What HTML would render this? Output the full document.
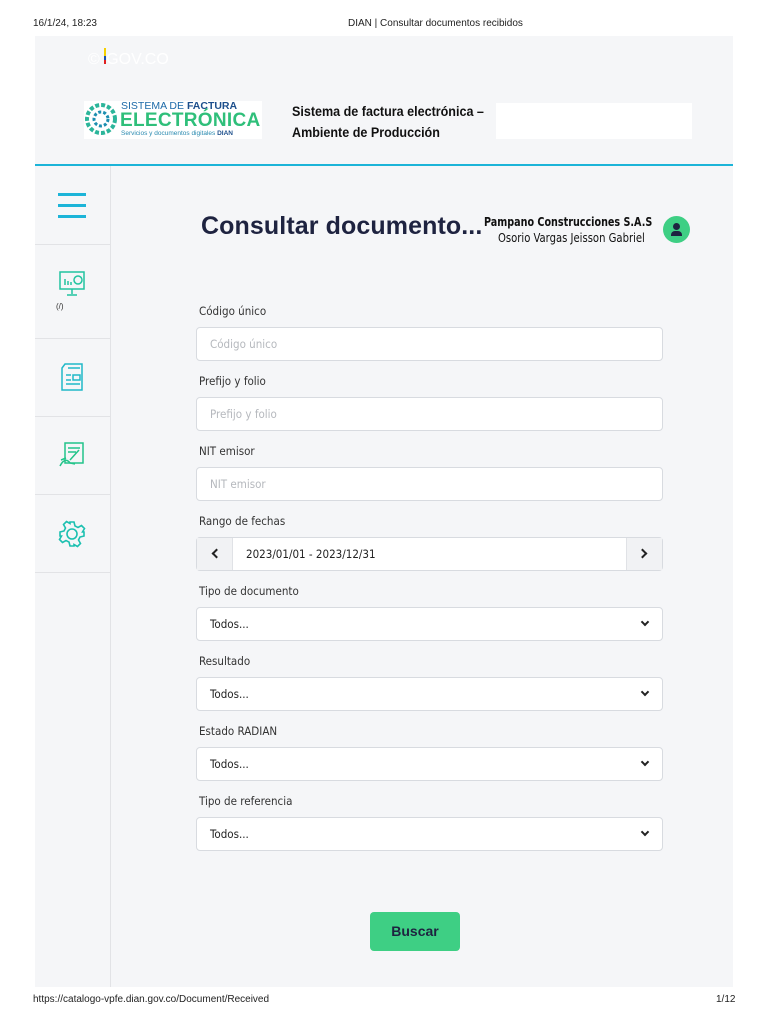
<!DOCTYPE html>
<html><head><meta charset="utf-8"><style>
*{box-sizing:border-box;margin:0;padding:0}
body{width:768px;height:1024px;background:#fff;font-family:"Liberation Sans",sans-serif;position:relative;overflow:hidden}
.a{position:absolute}
.top{font-size:10px;color:#222}
.page{left:35px;top:36px;width:698px;height:951px;background:#f5f6f8}
.line{left:35px;top:164px;width:698px;height:2px;background:#1cb4d8}
.side{left:110px;top:166px;width:1px;height:821px;background:#e2e3e6}
.sd{left:35px;width:75px;height:1px;background:#e2e3e6}
.lbl{left:199px;font-size:11.5px;color:#333;font-family:"DejaVu Sans Condensed","Liberation Sans",sans-serif}
.in{left:196px;width:467px;height:34px;background:#fff;border:1px solid #d8dbe0;border-radius:4px;font-size:11.5px;color:#b5b8bd;padding:9px 13px;font-family:"DejaVu Sans Condensed","Liberation Sans",sans-serif}
.sel{color:#222}
.chev{position:absolute;right:14px;top:11px;width:6px;height:6px;border-right:2px solid #222;border-bottom:2px solid #222;transform:rotate(45deg)}
</style></head><body>
<div class="a top" style="left:33px;top:18px">16/1/24, 18:23</div>
<div class="a top" style="left:348px;top:18px">DIAN | Consultar documentos recibidos</div>
<div class="a page"></div>
<div class="a" style="left:88px;top:48px;font-size:16px;color:#fff">© <span style="display:inline-block;width:2px;height:16px;background:linear-gradient(#f5d000 50%,#1a4fb0 50% 75%,#e02020 75%)"></span>GOV.CO</div>
<div class="a" style="left:84px;top:101px;width:178px;height:38px;background:#fff"></div>
<svg class="a" style="left:85px;top:102px" width="32" height="34" viewBox="0 0 32 34"><circle cx="16" cy="17" r="14" fill="none" stroke="#2bb59a" stroke-width="4" stroke-dasharray="4 2"/><circle cx="16" cy="17" r="7" fill="none" stroke="#1d8fb0" stroke-width="3" stroke-dasharray="3 2"/></svg>
<div class="a" style="left:121px;top:100px;font-size:10.5px;color:#1d6aa8">SISTEMA DE <b style="color:#1d4f8c">FACTURA</b></div>
<div class="a" style="left:120px;top:110px;font-size:19px;font-weight:bold;color:#2fbf7a;letter-spacing:.3px">ELECTRÓNICA</div>
<div class="a" style="left:121px;top:130px;font-size:6.5px;color:#2a8ab0">Servicios y documentos digitales <b style="color:#1d4f8c">DIAN</b></div>
<div class="a" style="left:292px;top:101px;font-size:13.5px;font-weight:bold;color:#111;line-height:21px;transform:scaleX(.93);transform-origin:left">Sistema de factura electrónica –<br>Ambiente de Producción</div>
<div class="a" style="left:496px;top:103px;width:196px;height:36px;background:#fff"></div>
<div class="a line"></div>
<div class="a side"></div>
<div class="a" style="left:58px;top:193px;width:28px;height:3px;background:#1cb4d8;box-shadow:0 11px 0 #1cb4d8,0 22px 0 #1cb4d8"></div>
<div class="a sd" style="top:244px"></div><div class="a sd" style="top:338px"></div><div class="a sd" style="top:416px"></div><div class="a sd" style="top:494px"></div><div class="a sd" style="top:572px"></div>
<svg class="a" style="left:58px;top:270px" width="28" height="28" viewBox="0 0 28 28" fill="none" stroke="#22c4a0" stroke-width="1.5"><rect x="2" y="2" width="24" height="17"/><path d="M7 15v-6M10 15v-4M13 15v-3M14 19v5M9 25h10"/><circle cx="20" cy="10" r="4"/></svg>
<div class="a" style="left:56px;top:302px;font-size:8px;color:#333">(/)</div>
<svg class="a" style="left:60px;top:362px" width="24" height="30" viewBox="0 0 24 30" fill="none" stroke="#20b8c8" stroke-width="1.5"><path d="M5 2h17v26H2V6zM8 6h12M6 13h5M13 13h7v5h-7zM6 18h5M6 22h14"/></svg>
<svg class="a" style="left:57px;top:440px" width="30" height="30" viewBox="0 0 30 30" fill="none" stroke="#22c48a" stroke-width="1.5"><rect x="8" y="3" width="18" height="20"/><path d="M11 8h12M11 12h8M22 10l-9 10M3 26c4-8 8-6 10-3l5 1M4 20l5-2"/></svg>
<svg class="a" style="left:58px;top:520px" width="28" height="28" viewBox="0 0 28 28" fill="none" stroke="#1cc0b0" stroke-width="1.6"><path d="M12 2h4l1 4 3 1.5 3.5-2 3 3-2 3.5L26 12v4l-4 1-1.5 3 2 3.5-3 3-3.5-2L16 26h-4l-1-4-3-1.5-3.5 2-3-3 2-3.5L2 16v-4l4-1 1.5-3-2-3.5 3-3 3.5 2z"/><circle cx="14" cy="14" r="5"/></svg>
<div class="a" style="left:201px;top:212px;font-size:25px;font-weight:bold;color:#1e2340;letter-spacing:.1px;white-space:nowrap">Consultar documento...</div>
<div class="a" style="left:484px;top:215px;font-size:12px;font-weight:bold;color:#111;font-family:'DejaVu Sans Condensed',sans-serif;transform:scaleX(.89);transform-origin:left;white-space:nowrap">Pampano Construcciones S.A.S</div>
<div class="a" style="left:498px;top:231px;font-size:12px;color:#111;font-family:'DejaVu Sans Condensed',sans-serif;transform:scaleX(.93);transform-origin:left;white-space:nowrap">Osorio Vargas Jeisson Gabriel</div>
<div class="a" style="left:663px;top:216px;width:27px;height:27px;border-radius:50%;background:#3ecf84"></div>
<div class="a" style="left:673px;top:223px;width:7px;height:7px;border-radius:50%;background:#1e2340"></div>
<div class="a" style="left:671px;top:231px;width:11px;height:5px;border-radius:4px 4px 0 0;background:#1e2340"></div>

<div class="a lbl" style="top:304px">Código único</div>
<div class="a in" style="top:327px">Código único</div>
<div class="a lbl" style="top:374px">Prefijo y folio</div>
<div class="a in" style="top:397px">Prefijo y folio</div>
<div class="a lbl" style="top:444px">NIT emisor</div>
<div class="a in" style="top:467px">NIT emisor</div>
<div class="a lbl" style="top:514px">Rango de fechas</div>
<div class="a in sel" style="top:537px;padding:0;background:#fff">
 <div class="a" style="left:0;top:0;width:36px;height:32px;background:#f1f2f4;border-right:1px solid #e0e2e6"></div>
 <div class="a" style="right:0;top:0;width:36px;height:32px;background:#f1f2f4;border-left:1px solid #e0e2e6"></div>
 <div class="a" style="left:16px;top:12px;width:7px;height:7px;border-left:2px solid #222;border-bottom:2px solid #222;transform:rotate(45deg)"></div>
 <div class="a" style="right:16px;top:12px;width:7px;height:7px;border-right:2px solid #222;border-top:2px solid #222;transform:rotate(45deg)"></div>
 <div class="a" style="left:49px;top:9px">2023/01/01 - 2023/12/31</div>
</div>
<div class="a lbl" style="top:584px">Tipo de documento</div>
<div class="a in sel" style="top:607px">Todos...<div class="chev"></div></div>
<div class="a lbl" style="top:654px">Resultado</div>
<div class="a in sel" style="top:677px">Todos...<div class="chev"></div></div>
<div class="a lbl" style="top:724px">Estado RADIAN</div>
<div class="a in sel" style="top:747px">Todos...<div class="chev"></div></div>
<div class="a lbl" style="top:794px">Tipo de referencia</div>
<div class="a in sel" style="top:817px">Todos...<div class="chev"></div></div>
<div class="a" style="left:370px;top:912px;width:90px;height:39px;background:#3ecf84;border-radius:4px;color:#1e2340;font-weight:bold;font-size:14px;text-align:center;line-height:39px">Buscar</div>
<div class="a top" style="left:33px;top:994px">https://catalogo-vpfe.dian.gov.co/Document/Received</div>
<div class="a top" style="left:716px;top:994px">1/12</div>
</body></html>
